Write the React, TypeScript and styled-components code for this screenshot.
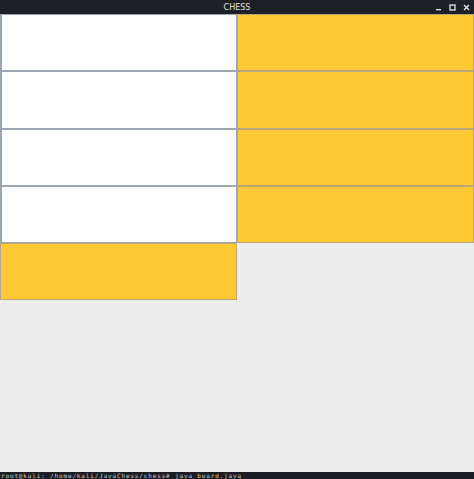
import React from "react";
import styled, { createGlobalStyle } from "styled-components";

const Global = createGlobalStyle`
  html, body { margin: 0; padding: 0; background: #ededed; overflow: hidden; }
  body { font-family: "DejaVu Sans", "Noto Sans", sans-serif; }
`;

const Window = styled.div`
  width: 474px;
  height: 479px;
  display: flex;
  flex-direction: column;
  background: #ededed;
`;

const TitleBar = styled.div`
  height: 14px;
  flex: none;
  background: #1e1f27;
  color: #e2e3e8;
  font-size: 8px;
  font-weight: 400;
  display: flex;
  align-items: center;
  justify-content: center;
  position: relative;
`;

const Controls = styled.div`
  position: absolute;
  right: 4px;
  top: 0;
  height: 14px;
  display: flex;
  align-items: center;
  gap: 7px;
`;

const Board = styled.div`
  flex: 1;
  display: grid;
  grid-template-columns: 1fr 1fr;
  grid-template-rows: repeat(8, 1fr);
  min-height: 0;
`;

const Cell = styled.div<{ $yellow: boolean }>`
  box-sizing: border-box;
  background: ${(p) => (p.$yellow ? "#fec934" : "#ffffff")};
  border: 1px solid ${(p) => (p.$yellow ? "#b9a77a" : "#9ea6b0")};
  border-left-width: ${(p) => (p.$yellow ? "1px" : "2px")};
`;

const Terminal = styled.div`
  height: 7px;
  flex: none;
  background: #1c1d23;
  color: #c9cad0;
  font-family: "DejaVu Sans Mono", "Liberation Mono", monospace;
  font-size: 6px;
  line-height: 6px;
  letter-spacing: 0.85px;
  padding-left: 1px;
  overflow: hidden;
  white-space: nowrap;
  padding-top: 1px;
  box-sizing: border-box;
`;

const cells = [false, true, false, true, false, true, false, true, true];

export default function App() {
  return (
    <Window>
      <Global />
      <TitleBar>
        CHESS
        <Controls>
          <svg width="7" height="7" viewBox="0 0 7 7">
            <rect x="1" y="5" width="5" height="1.3" fill="#e6e6ea" />
          </svg>
          <svg width="7" height="7" viewBox="0 0 7 7">
            <rect x="1" y="1" width="5" height="5" fill="none" stroke="#e6e6ea" strokeWidth="1.3" />
          </svg>
          <svg width="7" height="7" viewBox="0 0 7 7">
            <path d="M1 1 L6 6 M6 1 L1 6" stroke="#e6e6ea" strokeWidth="1.4" />
          </svg>
        </Controls>
      </TitleBar>
      <Board>
        {cells.map((y, i) => (
          <Cell key={i} $yellow={y} />
        ))}
      </Board>
      <Terminal>root@kali: /home/kali/JavaChess/chess# java board.java</Terminal>
    </Window>
  );
}
